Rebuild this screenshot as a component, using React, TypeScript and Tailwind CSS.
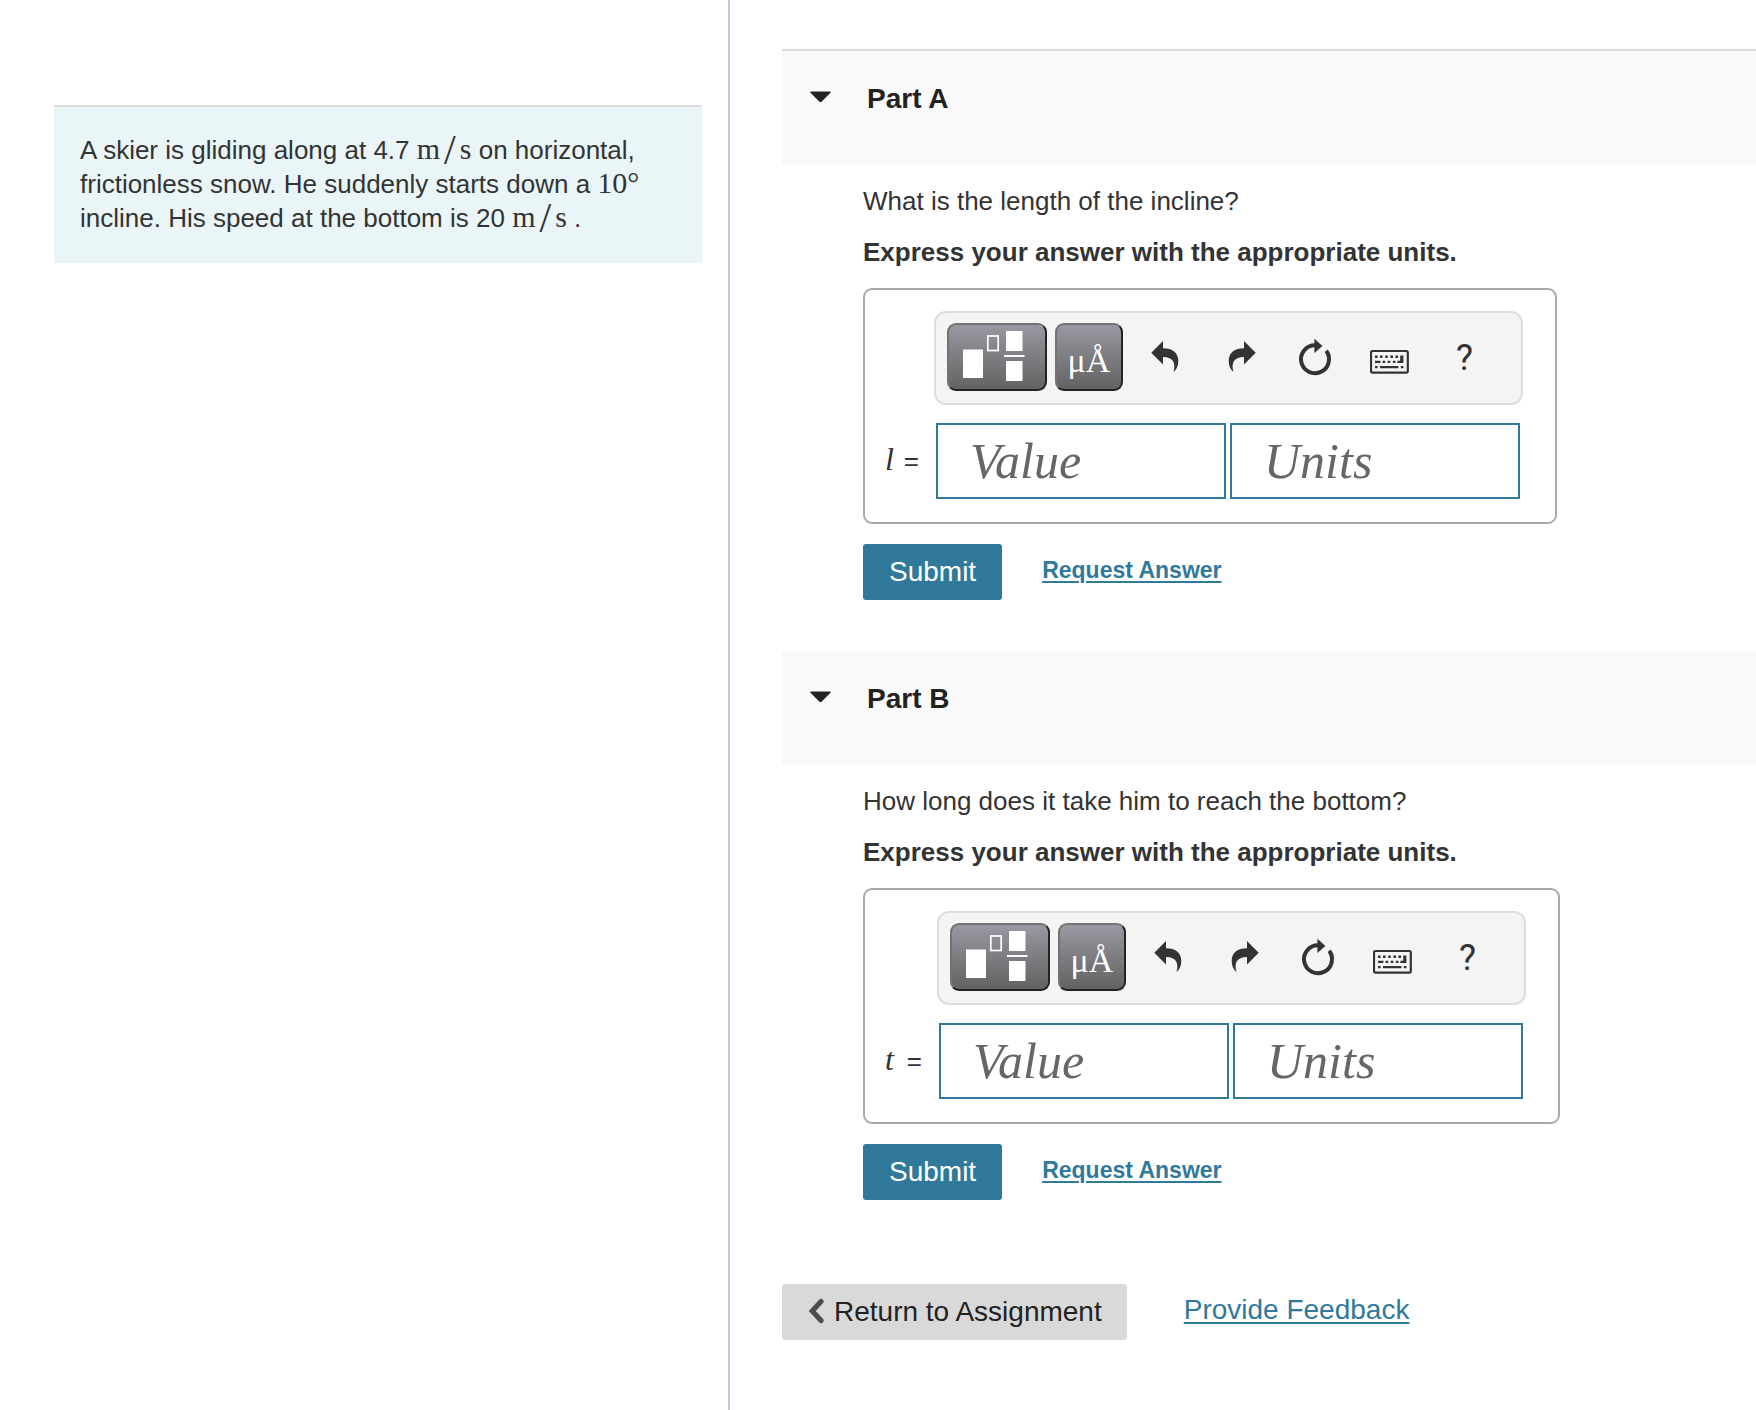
import React from "react";

function Slash() {
  return <span className="align-[-5px] text-[42px] leading-0">/</span>;
}

function MetersPerSecond() {
  return (
    <span className="font-['Liberation_Serif',serif] text-[30px] leading-0 whitespace-nowrap">
      <span>m</span>
      <span className="px-1">
        <Slash />
      </span>
      <span>s</span>
    </span>
  );
}

function TemplateIcon() {
  return (
    <svg viewBox="0 0 96 64" className="h-16 w-24" aria-hidden="true">
      <rect x="14" y="24.5" width="20" height="28.5" fill="#fff" />
      <rect x="38.8" y="11" width="10.4" height="14.5" fill="none" stroke="#fff" strokeWidth="1.7" />
      <rect x="57" y="6" width="16.5" height="20" fill="#fff" />
      <rect x="55" y="30" width="20.5" height="2" fill="#fff" />
      <rect x="57" y="36" width="16.5" height="20" fill="#fff" />
    </svg>
  );
}

function UndoIcon() {
  return (
    <svg viewBox="0 0 40 40" className="size-10" aria-hidden="true">
      <path
        d="M6.3 15.8 L18 4 V11.3 C27.5 11.3 33.3 15.5 33.3 24 C33.3 29 31.5 32.5 28.5 35 C31 26 28.5 20.3 18 20 V27.4 Z"
        fill="#333"
      />
    </svg>
  );
}

function RedoIcon() {
  return (
    <svg viewBox="-2 0 40 40" className="size-10" aria-hidden="true">
      <path
        d="M33.7 15.8 L22 4 V11.3 C12.5 11.3 6.7 15.5 6.7 24 C6.7 29 8.5 32.5 11.5 35 C9 26 11.5 20.3 22 20 V27.4 Z"
        fill="#333"
      />
    </svg>
  );
}

function ResetIcon() {
  return (
    <svg viewBox="0 0 40 40" className="size-10" aria-hidden="true">
      <path d="M20 8.2 A14 14 0 1 0 31.2 13.8" fill="none" stroke="#333" strokeWidth="4" />
      <path d="M19.4 1.8 L27.4 9 L19.4 16 Z" fill="#333" />
    </svg>
  );
}

function KeyboardIcon() {
  return (
    <svg viewBox="0 0 40 40" className="size-10" aria-hidden="true">
      <rect x="1" y="14" width="36.8" height="21.6" rx="1.5" fill="none" stroke="#333" strokeWidth="2.2" />
      <g fill="#333">
        <path d="M5 18.5h2.6v2.4H5zM10 18.5h2.6v2.4H10zM15.2 18.5h2.6v2.4h-2.6zM20.4 18.5h2.6v2.4h-2.6zM25.4 18.5h2.6v2.4h-2.6z" />
        <path d="M5 23.7h5.4v2.4H5zM12.6 23.7h2.6v2.4h-2.6zM17.7 23.7h2.6v2.4h-2.6zM22.9 23.7h2.6v2.4h-2.6z" />
        <path d="M30.2 18.5h3.2v7.6h-6v-2.4h2.8z" />
        <path d="M5 28.9h2.6v2.4H5zM10 28.9h18.4v2.4H10zM30.8 28.9h2.6v2.4h-2.6z" />
      </g>
    </svg>
  );
}

const darkButton =
  "flex h-[68px] items-center justify-center rounded-[9px] border-2 border-t-[#737373] border-l-[#737373] border-r-[#222] border-b-[#222] bg-linear-to-b from-[#9a98a2] to-[#636363]";
const iconButton = "flex h-[68px] w-[75px] items-center justify-center";
const field =
  "h-[76px] w-[290px] border-2 border-[#31799a] bg-white pl-8 font-['Liberation_Serif',serif] text-[50px] italic text-[#333] placeholder:text-[#666] placeholder:opacity-100";

function Toolbar() {
  return (
    <div
      role="toolbar"
      aria-label="Answer tools"
      className="flex w-[589px] items-start rounded-xl border-2 border-[#ddd] bg-[#f4f4f4] px-[11px] pt-[10px] pb-3"
    >
      <button type="button" aria-label="Templates" className={`${darkButton} w-[100px]`}>
        <TemplateIcon />
      </button>
      <button
        type="button"
        aria-label="Symbols"
        className={`${darkButton} ml-2 w-[68px] pt-2 font-['Liberation_Serif',serif] text-[34px] text-white`}
      >
        μÅ
      </button>
      <div className="ml-1 flex">
        <button type="button" aria-label="Undo" className={iconButton}>
          <UndoIcon />
        </button>
        <button type="button" aria-label="Redo" className={iconButton}>
          <RedoIcon />
        </button>
        <button type="button" aria-label="Reset" className={iconButton}>
          <ResetIcon />
        </button>
        <button type="button" aria-label="Keyboard shortcuts" className={iconButton}>
          <KeyboardIcon />
        </button>
        <button
          type="button"
          aria-label="Help"
          className={`${iconButton} pt-0.5 font-['Roboto',sans-serif] text-[36px] text-[#333]`}
        >
          ?
        </button>
      </div>
    </div>
  );
}

interface PartProps {
  id: string;
  title: string;
  question: string;
  symbol: string;
  labelWidth: string;
}

function Part({ id, title, question, symbol, labelWidth }: PartProps) {
  return (
    <section>
      <header className="bg-[#f9f9f9] pt-8 pb-[49px] pl-7">
        <h2 className="text-[28px] leading-8 font-bold text-[#222]">
          <button type="button" aria-expanded="true" className="flex items-center gap-9">
            <svg viewBox="0 0 21 16" className="h-4 w-[21px]" aria-hidden="true">
              <path d="M1.2 0.5 H19.8 Q21.8 0.5 20.2 2.1 L11.8 10.5 Q10.5 11.9 9.2 10.5 L0.8 2.1 Q-0.8 0.5 1.2 0.5 Z" fill="#222" />
            </svg>
            {title}
          </button>
        </h2>
      </header>
      <div className="pt-5 pl-[81px] text-[26px] leading-[34px] text-[#333]">
        <p>{question}</p>
        <p className="mt-[17px] font-bold">Express your answer with the appropriate units.</p>
        <form onSubmit={(event) => event.preventDefault()}>
          <div className="mt-[19px] flex w-fit rounded-[9px] border-2 border-[#aaa] pt-[21px] pr-8 pb-[23px] pl-5">
            <label
              htmlFor={`${id}-value`}
              className={`flex items-baseline justify-between self-end pr-[15px] pb-[21px] ${labelWidth}`}
            >
              <span className="font-['Liberation_Serif',serif] text-[32px] italic">{symbol}</span>
              <span>=</span>
            </label>
            <div>
              <Toolbar />
              <div className="mt-[18px] flex gap-1 pl-0.5">
                <input id={`${id}-value`} type="text" placeholder="Value" className={field} />
                <input type="text" aria-label={`${symbol} units`} placeholder="Units" className={field} />
              </div>
            </div>
          </div>
          <div className="mt-5 flex items-center gap-10">
            <button type="submit" className="h-14 rounded-[3px] bg-[#31799a] px-[26px] text-[28px] text-white">
              Submit
            </button>
            <a
              href="#answer"
              className="mb-1 text-[23px] font-bold text-[#31799a] underline decoration-2 underline-offset-3"
            >
              Request Answer
            </a>
          </div>
        </form>
      </div>
    </section>
  );
}

export default function App() {
  return (
    <div className="grid min-h-screen grid-cols-[730fr_1026fr] bg-white font-['Liberation_Sans',Arial,sans-serif] text-[#333]">
      <aside className="border-r-2 border-[#bccada] pt-[105px] pr-[26px] pl-[54px]">
        <div className="border-t-2 border-[#ddd] bg-[#eaf5f8] px-[26px] pt-[26px] pb-7">
          <p className="text-[26px] leading-[34px]">
            A skier is gliding along at 4.7 <MetersPerSecond /> on horizontal, frictionless snow. He suddenly starts
            down a <span className="font-['Liberation_Serif',serif] text-[30px] leading-0">10°</span> incline. His speed
            at the bottom is 20 <MetersPerSecond /> .
          </p>
        </div>
      </aside>
      <main className="pt-[49px] pl-[52px]">
        <div className="flex flex-col gap-[51px] border-t-2 border-[#ddd]">
          <Part
            id="part-a"
            title="Part A"
            question="What is the length of the incline?"
            symbol="l"
            labelWidth="w-[49px]"
          />
          <Part
            id="part-b"
            title="Part B"
            question="How long does it take him to reach the bottom?"
            symbol="t"
            labelWidth="w-[52px]"
          />
        </div>
        <footer className="mt-[84px] flex items-center gap-[57px] text-[28px]">
          <button
            type="button"
            className="flex h-14 items-center gap-2.5 rounded-[3px] bg-[#d9d9d9] pr-[25px] pl-[27px] text-[#222]"
          >
            <svg viewBox="0 0 15 28" className="h-7 w-[15px]" aria-hidden="true">
              <path d="M12 3.5 L3.2 13 L12 22.5" fill="none" stroke="#4d4d4d" strokeWidth="5.2" strokeLinecap="round" />
            </svg>
            Return to Assignment
          </button>
          <a href="#feedback" className="mb-1 text-[#31799a] underline decoration-2 underline-offset-3">
            Provide Feedback
          </a>
        </footer>
      </main>
    </div>
  );
}
